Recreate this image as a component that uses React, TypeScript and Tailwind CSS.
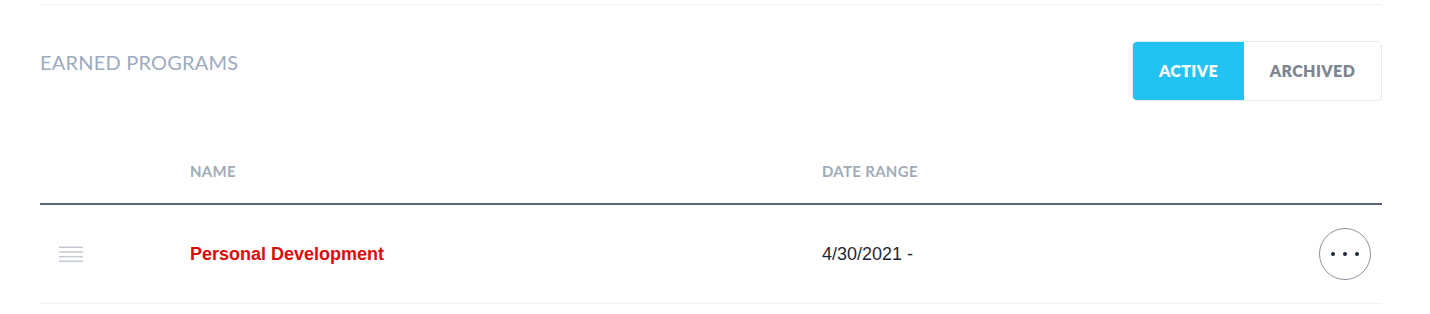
import React from "react";

export default function App() {
  return (
    <div className="w-[1430px] h-[314px] bg-white overflow-hidden">
      <div className="ml-[40px] w-[1342px]">
        <div className="h-[4px]" />
        <div className="h-px bg-[#eeeff1]" />
        <div className="flex items-start justify-between">
          <h2
            className="mt-[43px] text-[20px] leading-[28px] tracking-[0.2px] text-[#9dabbf] font-normal"
            style={{ fontFamily: "Lato, 'Open Sans', sans-serif" }}
          >
            EARNED PROGRAMS
          </h2>
          <div
            className="mt-[36px] flex h-[60px] rounded-[5px] border border-[#e3e6ea] overflow-hidden"
            style={{ fontFamily: "Lato, 'Open Sans', sans-serif" }}
          >
            <button className="w-[111px] bg-[#22c3f3] text-white text-[16px] font-extrabold tracking-[0.4px]">
              ACTIVE
            </button>
            <button className="w-[137px] bg-white text-[#7d8690] text-[16px] font-extrabold tracking-[0.4px]">
              ARCHIVED
            </button>
          </div>
        </div>
        <div
          className="mt-[59px] flex items-center h-[22px] text-[15px] font-bold text-[#a2acb7] tracking-[0.3px]"
          style={{ fontFamily: "Lato, 'Open Sans', sans-serif" }}
        >
          <div className="w-[150px]" />
          <div className="w-[632px]">NAME</div>
          <div>DATE RANGE</div>
        </div>
        <div className="mt-[21px] h-[2px] bg-[#5d6672]" />
        <div
          className="flex items-center h-[98px]"
          style={{ fontFamily: "'Liberation Sans', Arial, sans-serif" }}
        >
          <div className="w-[150px] pl-[19px] flex items-center">
            <svg width="24" height="16" viewBox="0 0 24 16">
              <rect x="0" y="0.5" width="24" height="1.5" fill="#c3cad3" />
              <rect x="0" y="5.2" width="24" height="1.5" fill="#c3cad3" />
              <rect x="0" y="9.9" width="24" height="1.5" fill="#c3cad3" />
              <rect x="0" y="14.5" width="24" height="1.5" fill="#c3cad3" />
            </svg>
          </div>
          <div className="w-[632px] text-[18px] font-bold text-[#dd0a0a]">
            Personal Development
          </div>
          <div className="flex-1 text-[18px] text-[#1f2838]">4/30/2021 -</div>
          <button className="mr-[11px] w-[52px] h-[52px] rounded-full border-[1.5px] border-[#8b959f] flex items-center justify-center gap-[7.5px]">
            <span className="w-[4.5px] h-[4.5px] rounded-full bg-[#1c2638]" />
            <span className="w-[4.5px] h-[4.5px] rounded-full bg-[#1c2638]" />
            <span className="w-[4.5px] h-[4.5px] rounded-full bg-[#1c2638]" />
          </button>
        </div>
        <div className="h-px bg-[#eff1f3]" />
      </div>
    </div>
  );
}
